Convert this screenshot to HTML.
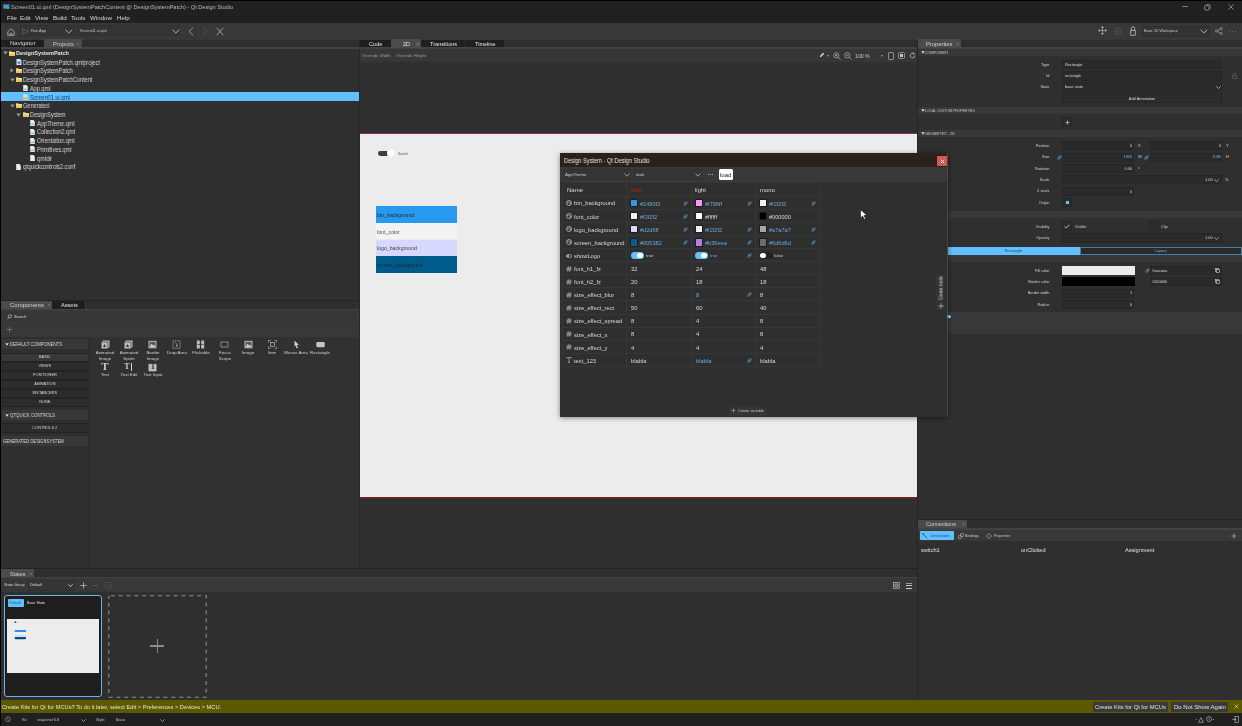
<!DOCTYPE html><html><head><meta charset="utf-8"><style>
html,body{margin:0;padding:0;width:1242px;height:726px;overflow:hidden;background:#000;}
body{position:relative;font-family:"Liberation Sans",sans-serif;}
.a{position:absolute;}
.t{position:absolute;white-space:nowrap;will-change:transform;}
</style></head><body><div id="root" style="position:absolute;left:0;top:0;width:1242px;height:726px;">
<div class="a" style="left:0px;top:0px;width:1242px;height:726px;background:#000;"></div>
<div class="a" style="left:1px;top:1px;width:1241px;height:22px;background:#202020;"></div>
<svg class="a" style="left:2.5px;top:3.5px" width="7" height="5.5" viewBox="0 0 7 5.5"><rect width="7" height="5.5" fill="#1e5c88"/><circle cx="2.2" cy="2.6" r="1.3" fill="none" stroke="#9fd0ee" stroke-width="0.8"/><path d="M5.6 1.4Q4.2 1 4.1 2.2T5.9 3.6Q5.5 4.6 4 4.2" fill="none" stroke="#9fd0ee" stroke-width="0.7"/></svg>
<div class="t" style="left:11px;top:3.84px;font-size:5.6px;line-height:6.72px;color:#b8b8b8;">Screen01.ui.qml (DesignSystemPatchContent @ DesignSystemPatch) - Qt Design Studio</div>
<svg class="a" style="left:1182px;top:3px" width="7" height="7" viewBox="0 0 7 7"><path d="M0.3 3.5H6" stroke="#a8a8a8" stroke-width="0.7"/></svg>
<svg class="a" style="left:1203.5px;top:3.5px" width="7" height="7" viewBox="0 0 7 7"><rect x="0.6" y="1.6" width="4.4" height="4.4" rx="0.8" fill="none" stroke="#a8a8a8" stroke-width="0.75"/><path d="M2 1.2A0.9 0.9 0 0 1 2.6 0.6H5.2A1 1 0 0 1 6.3 1.6V4.4A0.8 0.8 0 0 1 5.6 5.1" fill="none" stroke="#a8a8a8" stroke-width="0.6"/></svg>
<svg class="a" style="left:1227.5px;top:3.5px" width="6" height="6" viewBox="0 0 6 6"><path d="M0.5 0.5L5.5 5.5M5.5 0.5L0.5 5.5" stroke="#b0b0b0" stroke-width="0.65"/></svg>
<div class="t" style="left:7px;top:14.18px;font-size:6.2px;line-height:7.44px;color:#d8d8d8;">File</div>
<div class="t" style="left:20px;top:14.18px;font-size:6.2px;line-height:7.44px;color:#d8d8d8;">Edit</div>
<div class="t" style="left:35px;top:14.18px;font-size:6.2px;line-height:7.44px;color:#d8d8d8;">View</div>
<div class="t" style="left:53px;top:14.18px;font-size:6.2px;line-height:7.44px;color:#d8d8d8;">Build</div>
<div class="t" style="left:71px;top:14.18px;font-size:6.2px;line-height:7.44px;color:#d8d8d8;">Tools</div>
<div class="t" style="left:90px;top:14.18px;font-size:6.2px;line-height:7.44px;color:#d8d8d8;">Window</div>
<div class="t" style="left:117px;top:14.18px;font-size:6.2px;line-height:7.44px;color:#d8d8d8;">Help</div>
<div class="a" style="left:1px;top:23px;width:1241px;height:17px;background:#383838;"></div>
<div class="a" style="left:1px;top:40px;width:359px;height:529px;background:#2f2f2f;"></div>
<div class="a" style="left:1px;top:40px;width:359px;height:7px;background:#2e2e2e;"></div>
<div class="a" style="left:1px;top:40px;width:43px;height:7px;background:#1f1f1f;"></div>
<div class="a" style="left:1px;top:47px;width:359px;height:2px;background:#424242;"></div>
<div class="a" style="left:44px;top:39px;width:38px;height:9px;background:#4b4b4b;"></div>
<div class="t" style="left:10px;top:40.40px;font-size:6px;line-height:7.20px;color:#d0d0d0;">Navigator</div>
<div class="t" style="left:53px;top:40.55px;font-size:5.75px;line-height:6.90px;color:#c8c8c8;">Projects</div>
<svg class="a" style="left:75.5px;top:41.5px" width="4" height="4" viewBox="0 0 4 4"><path d="M0.5 0.5L3.5 3.5M3.5 0.5L0.5 3.5" stroke="#6a6a6a" stroke-width="0.6"/></svg>
<svg class="a" style="left:6.5px;top:27.5px" width="8" height="8" viewBox="0 0 8 8"><path d="M0.8 3.6L4 0.8L7.2 3.6V7.3H0.8Z M3 7.3V5.3H5V7.3" fill="none" stroke="#bdbdbd" stroke-width="0.75"/></svg>
<div class="a" style="left:19.7px;top:25.2px;width:55px;height:10.8px;background:#343434;border:0.5px solid #303030;box-sizing:border-box;"></div>
<svg class="a" style="left:21.5px;top:28px" width="8" height="7" viewBox="0 0 8 7"><path d="M0.6 0.5L6.8 3.5L0.6 6.5Z" fill="none" stroke="#468446" stroke-width="0.7"/></svg>
<div class="t" style="left:31px;top:29.03px;font-size:3.95px;line-height:4.74px;color:#c8c8c8;">Run App</div>
<svg class="a" style="left:65px;top:28.8px" width="8" height="5" viewBox="0 0 8 5"><path d="M0.5 0.8L3.8 4L7.2 0.8" fill="none" stroke="#d0d0d0" stroke-width="0.8"/></svg>
<div class="a" style="left:77px;top:25.2px;width:103px;height:10.8px;background:#343434;border:0.5px solid #303030;box-sizing:border-box;"></div>
<div class="t" style="left:79.7px;top:29.18px;font-size:3.7px;line-height:4.44px;color:#c0c0c0;">Screen01.ui.qml</div>
<svg class="a" style="left:171.5px;top:28.8px" width="8" height="5" viewBox="0 0 8 5"><path d="M0.5 0.8L3.8 4L7.2 0.8" fill="none" stroke="#d0d0d0" stroke-width="0.8"/></svg>
<svg class="a" style="left:187.5px;top:26.5px" width="6" height="9" viewBox="0 0 6 9"><path d="M5 0.8L1 4.5L5 8.2" fill="none" stroke="#a8a8a8" stroke-width="0.8"/></svg>
<svg class="a" style="left:202px;top:26.5px" width="6" height="9" viewBox="0 0 6 9"><path d="M1 0.8L5 4.5L1 8.2" fill="none" stroke="#5a5a5a" stroke-width="0.8"/></svg>
<svg class="a" style="left:215.5px;top:26.5px" width="8" height="9" viewBox="0 0 8 9"><path d="M0.7 0.8L7.3 8.2M7.3 0.8L0.7 8.2" fill="none" stroke="#b8b8b8" stroke-width="0.8"/></svg>
<svg class="a" style="left:1098px;top:26px" width="9" height="9" viewBox="0 0 9 9"><path d="M4.5 0.5V8.5M0.5 4.5H8.5M3 2L4.5 0.5L6 2M3 7L4.5 8.5L6 7M2 3L0.5 4.5L2 6M7 3L8.5 4.5L7 6" fill="none" stroke="#b0b0b0" stroke-width="0.7"/></svg>
<svg class="a" style="left:1113.5px;top:26.5px" width="8" height="8" viewBox="0 0 8 8"><circle cx="4" cy="4" r="3.3" fill="none" stroke="#5a5a5a" stroke-width="0.7"/><path d="M2.5 4L3.6 5.2L5.6 2.6" fill="none" stroke="#5a5a5a" stroke-width="0.7"/></svg>
<svg class="a" style="left:1129.5px;top:25.5px" width="6" height="10" viewBox="0 0 6 10"><path d="M1.3 4.5V2.5A1.7 1.7 0 0 1 4.7 2.5V4.5M0.7 4.5H5.3V9.3H0.7Z" fill="none" stroke="#c0c0c0" stroke-width="0.8"/></svg>
<div class="a" style="left:1142px;top:25.5px;width:67.5px;height:11px;background:#333333;border:0.5px solid #2e2e2e;box-sizing:border-box;"></div>
<div class="t" style="left:1143.6px;top:29.31px;font-size:3.65px;line-height:4.38px;color:#c8c8c8;">Basic 2D Workspace</div>
<svg class="a" style="left:1199.5px;top:28.5px" width="8" height="5" viewBox="0 0 8 5"><path d="M0.5 0.8L3.8 4L7.2 0.8" fill="none" stroke="#d0d0d0" stroke-width="0.8"/></svg>
<svg class="a" style="left:1214.5px;top:27px" width="8" height="8" viewBox="0 0 8 8"><circle cx="1.6" cy="4" r="1.1" fill="none" stroke="#b8b8b8" stroke-width="0.6"/><circle cx="6.3" cy="1.5" r="1.1" fill="none" stroke="#b8b8b8" stroke-width="0.6"/><circle cx="6.3" cy="6.5" r="1.1" fill="none" stroke="#b8b8b8" stroke-width="0.6"/><path d="M2.6 3.5L5.3 2M2.6 4.5L5.3 6" stroke="#b8b8b8" stroke-width="0.6"/></svg>
<div class="a" style="left:1229px;top:31px;width:0.9px;height:0.9px;background:#8a8a8a;border-radius:50%;"></div>
<div class="a" style="left:1232px;top:31px;width:0.9px;height:0.9px;background:#8a8a8a;border-radius:50%;"></div>
<div class="a" style="left:1235px;top:31px;width:0.9px;height:0.9px;background:#8a8a8a;border-radius:50%;"></div>
<svg class="a" style="left:2.6999999999999993px;top:51.400000000000006px" width="5" height="4" viewBox="0 0 5 4"><path d="M0.3 0.5H4.7L2.5 3.5Z" fill="#9a9a9a"/></svg>
<svg class="a" style="left:9.2px;top:50.6px" width="6" height="5" viewBox="0 0 6 5"><path d="M0 0.3H2.3L2.9 0.9H6V5H0Z" fill="#e9c45a"/><rect x="0" y="1.4" width="6" height="1.1" fill="#f5e7b0"/></svg>
<div class="t" style="left:16.2px;top:50.40px;font-size:5.5px;line-height:6.60px;color:#e6e6e6;font-weight:bold;">DesignSystemPatch</div>
<svg class="a" style="left:16.0px;top:58.93000000000001px" width="6" height="6" viewBox="0 0 6 6"><path d="M0.5 0H4L5.5 1.5V6H0.5Z" fill="#dfe6ea"/><circle cx="3" cy="3.6" r="1.6" fill="#4d93c4"/></svg>
<div class="t" style="left:23.0px;top:58.65px;font-size:6.3px;line-height:7.56px;color:#d6d6d6;transform:scaleX(0.88);transform-origin:0 50%;">DesignSystemPatch.qmlproject</div>
<svg class="a" style="left:10.2px;top:68.16px" width="4" height="5" viewBox="0 0 4 5"><path d="M0.5 0.3V4.7L3.5 2.5Z" fill="#9a9a9a"/></svg>
<svg class="a" style="left:16.0px;top:68.06px" width="6" height="5" viewBox="0 0 6 5"><path d="M0 0.3H2.3L2.9 0.9H6V5H0Z" fill="#e9c45a"/><rect x="0" y="1.4" width="6" height="1.1" fill="#f5e7b0"/></svg>
<div class="t" style="left:23.0px;top:67.38px;font-size:6.3px;line-height:7.56px;color:#d6d6d6;transform:scaleX(0.88);transform-origin:0 50%;">DesignSystemPatch</div>
<svg class="a" style="left:9.5px;top:77.59px" width="5" height="4" viewBox="0 0 5 4"><path d="M0.3 0.5H4.7L2.5 3.5Z" fill="#9a9a9a"/></svg>
<svg class="a" style="left:16.0px;top:76.79px" width="6" height="5" viewBox="0 0 6 5"><path d="M0 0.3H2.3L2.9 0.9H6V5H0Z" fill="#e9c45a"/><rect x="0" y="1.4" width="6" height="1.1" fill="#f5e7b0"/></svg>
<div class="t" style="left:23.0px;top:76.11px;font-size:6.3px;line-height:7.56px;color:#d6d6d6;transform:scaleX(0.88);transform-origin:0 50%;">DesignSystemPatchContent</div>
<svg class="a" style="left:22.799999999999997px;top:85.12px" width="5" height="6" viewBox="0 0 5 6"><path d="M0.2 0H3.3L4.8 1.5V6H0.2Z" fill="#ececec"/><rect x="0.2" y="3.6" width="4.6" height="1.6" fill="#8fc7d8"/></svg>
<div class="t" style="left:29.799999999999997px;top:84.84px;font-size:6.3px;line-height:7.56px;color:#d6d6d6;transform:scaleX(0.88);transform-origin:0 50%;">App.qml</div>
<div class="a" style="left:1px;top:92.35000000000001px;width:359px;height:9px;background:#61c0fd;"></div>
<svg class="a" style="left:22.799999999999997px;top:93.85000000000001px" width="5" height="6" viewBox="0 0 5 6"><path d="M0.2 0H3.3L4.8 1.5V6H0.2Z" fill="#cfd9e0"/><rect x="0.2" y="3.6" width="4.6" height="1.6" fill="#e9a95a"/></svg>
<div class="t" style="left:29.799999999999997px;top:93.57px;font-size:6.3px;line-height:7.56px;color:#0a3f66;transform:scaleX(0.88);transform-origin:0 50%;">Screen01.ui.qml</div>
<svg class="a" style="left:9.5px;top:103.78000000000002px" width="5" height="4" viewBox="0 0 5 4"><path d="M0.3 0.5H4.7L2.5 3.5Z" fill="#9a9a9a"/></svg>
<svg class="a" style="left:16.0px;top:102.98000000000002px" width="6" height="5" viewBox="0 0 6 5"><path d="M0 0.3H2.3L2.9 0.9H6V5H0Z" fill="#e9c45a"/><rect x="0" y="1.4" width="6" height="1.1" fill="#f5e7b0"/></svg>
<div class="t" style="left:23.0px;top:102.30px;font-size:6.3px;line-height:7.56px;color:#d6d6d6;transform:scaleX(0.88);transform-origin:0 50%;">Generated</div>
<svg class="a" style="left:16.299999999999997px;top:112.51px" width="5" height="4" viewBox="0 0 5 4"><path d="M0.3 0.5H4.7L2.5 3.5Z" fill="#9a9a9a"/></svg>
<svg class="a" style="left:22.799999999999997px;top:111.71000000000001px" width="6" height="5" viewBox="0 0 6 5"><path d="M0 0.3H2.3L2.9 0.9H6V5H0Z" fill="#e9c45a"/><rect x="0" y="1.4" width="6" height="1.1" fill="#f5e7b0"/></svg>
<div class="t" style="left:29.799999999999997px;top:111.03px;font-size:6.3px;line-height:7.56px;color:#d6d6d6;transform:scaleX(0.88);transform-origin:0 50%;">DesignSystem</div>
<svg class="a" style="left:29.599999999999998px;top:120.04px" width="5" height="6" viewBox="0 0 5 6"><path d="M0.2 0H3.3L4.8 1.5V6H0.2Z" fill="#ececec"/><rect x="0.2" y="3.6" width="4.6" height="1.6" fill="#8fc7d8"/></svg>
<div class="t" style="left:36.599999999999994px;top:119.76px;font-size:6.3px;line-height:7.56px;color:#d6d6d6;transform:scaleX(0.88);transform-origin:0 50%;">AppTheme.qml</div>
<svg class="a" style="left:29.599999999999998px;top:128.77px" width="5" height="6" viewBox="0 0 5 6"><path d="M0.2 0H3.3L4.8 1.5V6H0.2Z" fill="#ececec"/><rect x="0.2" y="3.6" width="4.6" height="1.6" fill="#8fc7d8"/></svg>
<div class="t" style="left:36.599999999999994px;top:128.49px;font-size:6.3px;line-height:7.56px;color:#d6d6d6;transform:scaleX(0.88);transform-origin:0 50%;">Collection2.qml</div>
<svg class="a" style="left:29.599999999999998px;top:137.5px" width="5" height="6" viewBox="0 0 5 6"><path d="M0.2 0H3.3L4.8 1.5V6H0.2Z" fill="#ececec"/><rect x="0.2" y="3.6" width="4.6" height="1.6" fill="#8fc7d8"/></svg>
<div class="t" style="left:36.599999999999994px;top:137.22px;font-size:6.3px;line-height:7.56px;color:#d6d6d6;transform:scaleX(0.88);transform-origin:0 50%;">Orientation.qml</div>
<svg class="a" style="left:29.599999999999998px;top:146.23000000000002px" width="5" height="6" viewBox="0 0 5 6"><path d="M0.2 0H3.3L4.8 1.5V6H0.2Z" fill="#ececec"/><rect x="0.2" y="3.6" width="4.6" height="1.6" fill="#8fc7d8"/></svg>
<div class="t" style="left:36.599999999999994px;top:145.95px;font-size:6.3px;line-height:7.56px;color:#d6d6d6;transform:scaleX(0.88);transform-origin:0 50%;">Primitives.qml</div>
<svg class="a" style="left:29.599999999999998px;top:154.96px" width="5" height="6" viewBox="0 0 5 6"><path d="M0.2 0H3.3L4.8 1.5V6H0.2Z" fill="#ececec"/></svg>
<div class="t" style="left:36.599999999999994px;top:154.68px;font-size:6.3px;line-height:7.56px;color:#d6d6d6;transform:scaleX(0.88);transform-origin:0 50%;">qmldir</div>
<svg class="a" style="left:16.0px;top:163.69px" width="5" height="6" viewBox="0 0 5 6"><path d="M0.2 0H3.3L4.8 1.5V6H0.2Z" fill="#ececec"/></svg>
<div class="t" style="left:23.0px;top:163.41px;font-size:6.3px;line-height:7.56px;color:#d6d6d6;transform:scaleX(0.88);transform-origin:0 50%;">qtquickcontrols2.conf</div>
<div class="a" style="left:1px;top:300px;width:359px;height:1px;background:#242424;"></div>
<div class="a" style="left:1px;top:301px;width:359px;height:8px;background:#2e2e2e;"></div>
<div class="a" style="left:1px;top:301px;width:51px;height:8px;background:#4b4b4b;"></div>
<div class="a" style="left:52px;top:301px;width:33px;height:8px;background:#1f1f1f;"></div>
<div class="a" style="left:85px;top:301px;width:1px;height:8px;background:#3e3e3e;"></div>
<div class="t" style="left:10px;top:301.90px;font-size:6px;line-height:7.20px;color:#d0d0d0;">Components</div>
<svg class="a" style="left:47px;top:303px" width="4" height="4" viewBox="0 0 4 4"><path d="M0.5 0.5L3.5 3.5M3.5 0.5L0.5 3.5" stroke="#7a7a7a" stroke-width="0.6"/></svg>
<div class="t" style="left:60.5px;top:302.14px;font-size:5.6px;line-height:6.72px;color:#e0e0e0;">Assets</div>
<div class="a" style="left:1px;top:309px;width:359px;height:1px;background:#424242;"></div>
<div class="a" style="left:1px;top:310px;width:359px;height:27px;background:#383838;"></div>
<div class="a" style="left:4px;top:311.5px;width:352px;height:10.5px;background:#363636;"></div>
<svg class="a" style="left:6.5px;top:313.5px" width="5" height="6" viewBox="0 0 5 6"><circle cx="3" cy="2.2" r="1.6" fill="none" stroke="#d0d0d0" stroke-width="0.6"/><path d="M1.9 3.4L0.5 5.2" stroke="#d0d0d0" stroke-width="0.7"/></svg>
<div class="t" style="left:14.3px;top:314.86px;font-size:3.9px;line-height:4.68px;color:#d8d8d8;">Search</div>
<svg class="a" style="left:5.5px;top:326px" width="7" height="7" viewBox="0 0 7 7"><path d="M3.5 0.5V6.5M0.5 3.5H6.5" stroke="#8a8a8a" stroke-width="0.6"/></svg>
<div class="a" style="left:1px;top:337px;width:359px;height:232px;background:#2f2f2f;"></div>
<div class="a" style="left:89px;top:337px;width:271px;height:232px;background:#313131;"></div>
<div class="a" style="left:2.4px;top:339px;width:85.6px;height:10.3px;background:#383838;"></div>
<svg class="a" style="left:4.9px;top:342.65px" width="4" height="3" viewBox="0 0 4 3"><path d="M0.2 0.3H3.8L2 2.8Z" fill="#d8d8d8"/></svg>
<div class="t" style="left:9.9px;top:341.41px;font-size:5.4px;line-height:6.48px;color:#d8d8d8;transform:scaleX(0.8170781838757899);transform-origin:0 50%;">DEFAULT COMPONENTS</div>
<div class="a" style="left:2.4px;top:352.5px;width:85.6px;height:9px;background:#383838;border-top:1px solid #232323;border-bottom:1px solid #232323;box-sizing:border-box;"></div>
<div class="t" style="left:2.4px;top:355.16px;font-size:3.9px;line-height:4.68px;color:#d8d8d8;width:85.6px;text-align:center;">BASIC</div>
<div class="a" style="left:2.4px;top:361.5px;width:85.6px;height:9px;background:#2c2c2c;border-top:1px solid #232323;border-bottom:1px solid #232323;box-sizing:border-box;"></div>
<div class="t" style="left:2.4px;top:364.16px;font-size:3.9px;line-height:4.68px;color:#d8d8d8;width:85.6px;text-align:center;">VIEWS</div>
<div class="a" style="left:2.4px;top:370.5px;width:85.6px;height:9px;background:#2c2c2c;border-top:1px solid #232323;border-bottom:1px solid #232323;box-sizing:border-box;"></div>
<div class="t" style="left:2.4px;top:373.16px;font-size:3.9px;line-height:4.68px;color:#d8d8d8;width:85.6px;text-align:center;">POSITIONER</div>
<div class="a" style="left:2.4px;top:379.5px;width:85.6px;height:9px;background:#2c2c2c;border-top:1px solid #232323;border-bottom:1px solid #232323;box-sizing:border-box;"></div>
<div class="t" style="left:2.4px;top:382.16px;font-size:3.9px;line-height:4.68px;color:#d8d8d8;width:85.6px;text-align:center;">ANIMATION</div>
<div class="a" style="left:2.4px;top:388.5px;width:85.6px;height:9px;background:#2c2c2c;border-top:1px solid #232323;border-bottom:1px solid #232323;box-sizing:border-box;"></div>
<div class="t" style="left:2.4px;top:391.16px;font-size:3.9px;line-height:4.68px;color:#d8d8d8;width:85.6px;text-align:center;">INSTANCERS</div>
<div class="a" style="left:2.4px;top:397.5px;width:85.6px;height:9px;background:#2c2c2c;border-top:1px solid #232323;border-bottom:1px solid #232323;box-sizing:border-box;"></div>
<div class="t" style="left:2.4px;top:400.16px;font-size:3.9px;line-height:4.68px;color:#d8d8d8;width:85.6px;text-align:center;">NONE</div>
<div class="a" style="left:2.4px;top:410px;width:85.6px;height:10.3px;background:#383838;"></div>
<svg class="a" style="left:4.9px;top:413.65px" width="4" height="3" viewBox="0 0 4 3"><path d="M0.2 0.3H3.8L2 2.8Z" fill="#d8d8d8"/></svg>
<div class="t" style="left:9.9px;top:412.41px;font-size:5.4px;line-height:6.48px;color:#d8d8d8;transform:scaleX(0.8020894429990124);transform-origin:0 50%;">QTQUICK CONTROLS</div>
<div class="a" style="left:2.4px;top:422.5px;width:85.6px;height:10px;background:#2c2c2c;border-top:1px solid #232323;border-bottom:1px solid #232323;box-sizing:border-box;"></div>
<div class="t" style="left:2.4px;top:425.86px;font-size:3.9px;line-height:4.68px;color:#d8d8d8;width:85.6px;text-align:center;">CONTROLS 2</div>
<div class="a" style="left:1px;top:435.6px;width:87px;height:10.4px;background:#383838;"></div>
<div class="t" style="left:2.5px;top:438.06px;font-size:5.4px;line-height:6.48px;color:#d8d8d8;transform:scaleX(0.785948908489295);transform-origin:0 50%;">GENERATED DESIGNSYSTEM</div>
<div class="a" style="left:89px;top:337px;width:1px;height:232px;background:#2a2a2a;"></div>
<svg class="a" style="left:100.5px;top:340px" width="9" height="9" viewBox="0 0 9 9"><path d="M2 0.5H8.5V7L7 8.5H0.5V2Z" fill="#bdbdbd"/><path d="M0.5 2H7V8.5" fill="none" stroke="#2d2d2d" stroke-width="0.6"/><path d="M2 7L3.5 4L5 7Z" fill="#333"/></svg>
<div class="t" style="left:93.0px;top:349.6px;width:24px;text-align:center;font-size:4.4px;line-height:6.2px;color:#cfcfcf;">Animated<br>Image</div>
<svg class="a" style="left:124.4px;top:340px" width="9" height="9" viewBox="0 0 9 9"><path d="M2 0.5H8.5V7L7 8.5H0.5V2Z" fill="#bdbdbd"/><path d="M0.5 2H7V8.5" fill="none" stroke="#2d2d2d" stroke-width="0.6"/><path d="M2 7L3.5 4L5 7Z" fill="#333"/></svg>
<div class="t" style="left:116.9px;top:349.6px;width:24px;text-align:center;font-size:4.4px;line-height:6.2px;color:#cfcfcf;">Animated<br>Sprite</div>
<svg class="a" style="left:148.3px;top:340px" width="9" height="9" viewBox="0 0 9 9"><rect x="0.5" y="0.8" width="8" height="7.5" fill="#bdbdbd"/><rect x="1.5" y="1.8" width="6" height="5.5" fill="#555"/><path d="M1.5 7.3L3.5 3.5L5 5.5L6 4.5L7.5 7.3Z" fill="#ccc"/></svg>
<div class="t" style="left:140.8px;top:349.6px;width:24px;text-align:center;font-size:4.4px;line-height:6.2px;color:#cfcfcf;">Border<br>Image</div>
<svg class="a" style="left:172.2px;top:340px" width="9" height="9" viewBox="0 0 9 9"><rect x="1" y="0.8" width="7" height="7.5" fill="none" stroke="#bdbdbd" stroke-width="0.7" stroke-dasharray="1.2 0.6"/><path d="M3.5 2.5L5.5 5.5L4.5 5.5L5 7" stroke="#bdbdbd" stroke-width="0.7" fill="none"/></svg>
<div class="t" style="left:164.7px;top:349.6px;width:24px;text-align:center;font-size:4.4px;line-height:6.2px;color:#cfcfcf;">Drop Area</div>
<svg class="a" style="left:196.1px;top:340px" width="9" height="9" viewBox="0 0 9 9"><rect x="0.8" y="0.5" width="3" height="8" fill="#bdbdbd"/><rect x="5.2" y="0.5" width="3" height="8" fill="#bdbdbd"/><path d="M1.5 4.5H7.5" stroke="#333" stroke-width="0.7"/></svg>
<div class="t" style="left:188.6px;top:349.6px;width:24px;text-align:center;font-size:4.4px;line-height:6.2px;color:#cfcfcf;">Flickable</div>
<svg class="a" style="left:220.0px;top:340px" width="9" height="9" viewBox="0 0 9 9"><rect x="1" y="2" width="7" height="5" fill="none" stroke="#bdbdbd" stroke-width="0.6"/></svg>
<div class="t" style="left:212.5px;top:349.6px;width:24px;text-align:center;font-size:4.4px;line-height:6.2px;color:#cfcfcf;">Focus<br>Scope</div>
<svg class="a" style="left:243.89999999999998px;top:340px" width="9" height="9" viewBox="0 0 9 9"><rect x="0.5" y="0.8" width="8" height="7.5" fill="#bdbdbd"/><rect x="1.5" y="1.8" width="6" height="5.5" fill="#555"/><path d="M1.5 7.3L3.5 3.5L5 5.5L6 4.5L7.5 7.3Z" fill="#ccc"/></svg>
<div class="t" style="left:236.39999999999998px;top:349.6px;width:24px;text-align:center;font-size:4.4px;line-height:6.2px;color:#cfcfcf;">Image</div>
<svg class="a" style="left:267.79999999999995px;top:340px" width="9" height="9" viewBox="0 0 9 9"><path d="M0.5 2.5V0.5H2.5M6.5 0.5H8.5V2.5M8.5 6.5V8.5H6.5M2.5 8.5H0.5V6.5" fill="none" stroke="#bdbdbd" stroke-width="0.6"/><rect x="2.5" y="2.5" width="4" height="4" fill="none" stroke="#bdbdbd" stroke-width="0.7"/></svg>
<div class="t" style="left:260.29999999999995px;top:349.6px;width:24px;text-align:center;font-size:4.4px;line-height:6.2px;color:#cfcfcf;">Item</div>
<svg class="a" style="left:291.7px;top:340px" width="9" height="9" viewBox="0 0 9 9"><path d="M2.5 0.5L7 5H4.8L6 8L4.8 8.5L3.6 5.5L2.5 6.8Z" fill="#cfcfcf"/></svg>
<div class="t" style="left:284.2px;top:349.6px;width:24px;text-align:center;font-size:4.4px;line-height:6.2px;color:#cfcfcf;">Mouse Area</div>
<svg class="a" style="left:315.6px;top:340px" width="9" height="9" viewBox="0 0 9 9"><rect x="0.3" y="2" width="8.4" height="5.3" rx="1.2" fill="#c4c4c4"/></svg>
<div class="t" style="left:308.1px;top:349.6px;width:24px;text-align:center;font-size:4.4px;line-height:6.2px;color:#cfcfcf;">Rectangle</div>
<div class="t" style="left:100.0px;top:360.5px;width:10px;text-align:center;font-family:'Liberation Serif',serif;font-weight:bold;font-size:11px;line-height:11px;color:#cfcfcf;">T</div>
<div class="t" style="left:93.0px;top:371.6px;width:24px;text-align:center;font-size:4.4px;line-height:6.2px;color:#cfcfcf;">Text</div>
<div class="t" style="left:123.4px;top:362.0px;width:8px;text-align:center;font-family:'Liberation Serif',serif;font-weight:bold;font-size:8px;line-height:9px;color:#cfcfcf;">T</div>
<div class="a" style="left:130.70000000000002px;top:362.5px;width:0.7px;height:8.5px;background:#cfcfcf;"></div>
<div class="t" style="left:116.9px;top:371.6px;width:24px;text-align:center;font-size:4.4px;line-height:6.2px;color:#cfcfcf;">Text Edit</div>
<svg class="a" style="left:148.3px;top:362.5px" width="9" height="9" viewBox="0 0 9 9"><rect x="0.5" y="0.8" width="8" height="7.5" fill="#bdbdbd"/></svg>
<div class="t" style="left:148.8px;top:362.8px;width:8px;text-align:center;font-family:'Liberation Serif',serif;font-weight:bold;font-size:7.5px;line-height:8px;color:#333;">T</div>
<div class="t" style="left:140.8px;top:371.6px;width:24px;text-align:center;font-size:4.4px;line-height:6.2px;color:#cfcfcf;">Text Input</div>
<div class="a" style="left:360px;top:40px;width:557px;height:529px;background:#303030;"></div>
<div class="a" style="left:360px;top:40px;width:557px;height:7px;background:#2e2e2e;"></div>
<div class="a" style="left:360px;top:40px;width:31px;height:7px;background:#1f1f1f;"></div>
<div class="a" style="left:421px;top:40px;width:44px;height:7px;background:#1f1f1f;"></div>
<div class="a" style="left:466px;top:40px;width:38px;height:7px;background:#1f1f1f;"></div>
<div class="a" style="left:360px;top:47px;width:557px;height:2px;background:#424242;"></div>
<div class="a" style="left:391px;top:39px;width:30px;height:9px;background:#4b4b4b;"></div>
<div class="a" style="left:360px;top:49px;width:557px;height:13px;background:#363636;"></div>
<div class="a" style="left:360px;top:133px;width:557px;height:1px;background:#8a2870;"></div>
<div class="a" style="left:360px;top:134px;width:557px;height:363px;background:#ececec;"></div>
<div class="a" style="left:360px;top:497px;width:557px;height:1px;background:#8a1e1e;"></div>
<div class="a" style="left:917px;top:133px;width:1px;height:365px;background:#000;"></div>
<div class="a" style="left:359px;top:40px;width:1px;height:529px;background:#282828;"></div>
<div class="t" style="left:369px;top:40.74px;font-size:5.6px;line-height:6.72px;color:#e8e8e8;">Code</div>
<div class="t" style="left:402.8px;top:40.86px;font-size:5.4px;line-height:6.48px;color:#e8e8e8;">2D</div>
<svg class="a" style="left:415.5px;top:41.8px" width="4" height="4" viewBox="0 0 4 4"><path d="M0.5 0.5L3.5 3.5M3.5 0.5L0.5 3.5" stroke="#8a8a8a" stroke-width="0.6"/></svg>
<div class="t" style="left:430px;top:40.74px;font-size:5.6px;line-height:6.72px;color:#e8e8e8;">Transitions</div>
<div class="t" style="left:475.2px;top:40.80px;font-size:5.5px;line-height:6.60px;color:#e8e8e8;">Timeline</div>
<div class="a" style="left:361px;top:50.6px;width:30px;height:9.3px;background:#383838;"></div>
<div class="a" style="left:394.5px;top:50.6px;width:32px;height:9.3px;background:#383838;"></div>
<div class="t" style="left:361.6px;top:53.42px;font-size:4.3px;line-height:5.16px;color:#9a9a9a;">Override Width</div>
<div class="t" style="left:395.5px;top:53.42px;font-size:4.3px;line-height:5.16px;color:#9a9a9a;">Override Height</div>
<svg class="a" style="left:818.5px;top:52px" width="6" height="6" viewBox="0 0 6 6"><path d="M0.8 5.2L1.2 3.8L4.2 0.8L5.2 1.8L2.2 4.8Z" fill="#e0e0e0"/></svg>
<div class="t" style="left:826.5px;top:54.20px;font-size:3.5px;line-height:4.20px;color:#9a9a9a;">▾</div>
<svg class="a" style="left:832.5px;top:51.5px" width="8" height="8" viewBox="0 0 8 8"><circle cx="3.3" cy="3.3" r="2.6" fill="none" stroke="#c8c8c8" stroke-width="0.6"/><path d="M5.2 5.2L7.5 7.5M2 3.3H4.6M3.3 2V4.6" stroke="#c8c8c8" stroke-width="0.6"/></svg>
<svg class="a" style="left:843.5px;top:51.5px" width="8" height="8" viewBox="0 0 8 8"><circle cx="3.3" cy="3.3" r="2.6" fill="none" stroke="#c8c8c8" stroke-width="0.6"/><path d="M5.2 5.2L7.5 7.5M2 3.3H4.6" stroke="#c8c8c8" stroke-width="0.6"/></svg>
<div class="t" style="left:855px;top:52.88px;font-size:5.2px;line-height:6.24px;color:#c8c8c8;">100 %</div>
<div class="t" style="left:880.5px;top:54.20px;font-size:3.5px;line-height:4.20px;color:#9a9a9a;">▾</div>
<svg class="a" style="left:887.5px;top:51.5px" width="6" height="8" viewBox="0 0 6 8"><rect x="0.5" y="0.5" width="5" height="7" rx="0.6" fill="none" stroke="#c8c8c8" stroke-width="0.6"/></svg>
<svg class="a" style="left:897.5px;top:51.5px" width="7" height="7" viewBox="0 0 7 7"><rect x="0.5" y="0.5" width="6" height="6" rx="1" fill="none" stroke="#c8c8c8" stroke-width="0.6"/><rect x="2" y="2" width="3" height="3" fill="#c8c8c8"/></svg>
<svg class="a" style="left:908.5px;top:51.8px" width="7" height="7" viewBox="0 0 7 7"><path d="M5.8 3.5A2.3 2.3 0 1 1 4.8 1.6" fill="none" stroke="#c8c8c8" stroke-width="0.7"/><path d="M4 0.5L5.6 1.5L4.4 2.8" fill="none" stroke="#c8c8c8" stroke-width="0.6"/></svg>
<div class="a" style="left:377.9px;top:151px;width:11px;height:4.8px;background:#3d3d3d;border-radius:2.4px;"></div>
<div class="a" style="left:387.2px;top:148.9px;width:8.2px;height:8.2px;background:#ffffff;border-radius:50%;box-shadow:0 0 0.6px rgba(0,0,0,0.35);"></div>
<div class="t" style="left:398px;top:151.66px;font-size:3.4px;line-height:4.08px;color:#555555;">Switch</div>
<div class="a" style="left:376.1px;top:206.1px;width:80.8px;height:16.7px;background:#2999f0;"></div>
<div class="a" style="left:376.1px;top:222.8px;width:80.8px;height:16.7px;background:#f3f3f3;"></div>
<div class="a" style="left:376.1px;top:239.5px;width:80.8px;height:16.6px;background:#d8d8ff;"></div>
<div class="a" style="left:376.1px;top:256.1px;width:80.8px;height:16.8px;background:#005a8a;"></div>
<div class="t" style="left:377px;top:211.88px;font-size:5.2px;line-height:6.24px;color:#1d2b38;">btn_background</div>
<div class="t" style="left:377px;top:228.58px;font-size:5.2px;line-height:6.24px;color:#555;">font_color</div>
<div class="t" style="left:377px;top:245.18px;font-size:5.2px;line-height:6.24px;color:#444;">logo_background</div>
<div class="t" style="left:377px;top:261.88px;font-size:5.2px;line-height:6.24px;color:#1a2a35;">screen_background</div>
<div class="a" style="left:918px;top:40px;width:324px;height:480px;background:#2f2f2f;"></div>
<div class="a" style="left:918px;top:40px;width:324px;height:7px;background:#2e2e2e;"></div>
<div class="a" style="left:918px;top:47px;width:324px;height:2px;background:#424242;"></div>
<div class="a" style="left:918px;top:39px;width:43px;height:9px;background:#4b4b4b;"></div>
<div class="t" style="left:926px;top:40.52px;font-size:5.8px;line-height:6.96px;color:#d0d0d0;">Properties</div>
<svg class="a" style="left:956px;top:41.8px" width="4" height="4" viewBox="0 0 4 4"><path d="M0.5 0.5L3.5 3.5M3.5 0.5L0.5 3.5" stroke="#7a7a7a" stroke-width="0.6"/></svg>
<div class="a" style="left:918px;top:49px;width:324px;height:7px;background:#383838;"></div>
<svg class="a" style="left:920.5px;top:51.2px" width="4" height="3" viewBox="0 0 4 3"><path d="M0.2 0.3H3.8L2 2.8Z" fill="#d8d8d8"/></svg>
<div class="t" style="left:925px;top:51.04px;font-size:4.1px;line-height:4.92px;color:#c8c8c8;transform:scaleX(0.8818011257035647);transform-origin:0 50%;">COMPONENT</div>
<div class="t" style="left:1000px;top:62.56px;font-size:3.9px;line-height:4.68px;color:#d0d0d0;width:49.5px;text-align:right;">Type</div>
<div class="a" style="left:1062.4px;top:59.5px;width:160.1px;height:9.6px;background:#2a2a2a;border:0.6px solid #262626;box-sizing:border-box;border-radius:0.6px;"></div>
<div class="t" style="left:1064.5px;top:62.56px;font-size:3.9px;line-height:4.68px;color:#d8d8d8;">Rectangle</div>
<div class="t" style="left:1000px;top:74.16px;font-size:3.9px;line-height:4.68px;color:#d0d0d0;width:49.5px;text-align:right;">Id</div>
<div class="a" style="left:1062.4px;top:71px;width:160.1px;height:9.6px;background:#2a2a2a;border:0.6px solid #262626;box-sizing:border-box;border-radius:0.6px;"></div>
<div class="t" style="left:1064.5px;top:74.16px;font-size:3.9px;line-height:4.68px;color:#d8d8d8;">rectangle</div>
<svg class="a" style="left:1231.5px;top:72.5px" width="5" height="6" viewBox="0 0 5 6"><path d="M1.1 2.6V1.6A1.4 1.4 0 0 1 3.9 1.6V2.6M0.6 2.6H4.4V5.6H0.6Z" fill="none" stroke="#6a6a6a" stroke-width="0.6"/></svg>
<div class="t" style="left:1000px;top:85.16px;font-size:3.9px;line-height:4.68px;color:#d0d0d0;width:49.5px;text-align:right;">State</div>
<div class="a" style="left:1062.4px;top:82.3px;width:160.1px;height:9.6px;background:#2a2a2a;border:0.6px solid #262626;box-sizing:border-box;border-radius:0.6px;"></div>
<div class="t" style="left:1064.5px;top:85.16px;font-size:3.9px;line-height:4.68px;color:#d8d8d8;">base state</div>
<svg class="a" style="left:1215.5px;top:86px" width="5" height="3" viewBox="0 0 5 3"><path d="M0.4 0.4L2.5 2.5L4.6 0.4" fill="none" stroke="#d0d0d0" stroke-width="0.7"/></svg>
<div class="a" style="left:1062.4px;top:93.4px;width:160.1px;height:9.9px;background:#2c2c2c;border:0.6px solid #262626;box-sizing:border-box;border-radius:0.6px;"></div>
<div class="t" style="left:1062.4px;top:96.56px;font-size:3.9px;line-height:4.68px;color:#d8d8d8;width:160.1px;text-align:center;">Add Annotation</div>
<div class="a" style="left:918px;top:106.8px;width:324px;height:7.4px;background:#383838;"></div>
<svg class="a" style="left:920.5px;top:109.2px" width="4" height="3" viewBox="0 0 4 3"><path d="M0.2 0.3H3.8L2 2.8Z" fill="#d8d8d8"/></svg>
<div class="t" style="left:925px;top:109.04px;font-size:4.1px;line-height:4.92px;color:#c8c8c8;transform:scaleX(0.8387021189546942);transform-origin:0 50%;">LOCAL CUSTOM PROPERTIES</div>
<div class="a" style="left:1062px;top:117px;width:10px;height:10px;background:#2c2c2c;border:0.6px solid #262626;box-sizing:border-box;border-radius:0.6px;"></div>
<svg class="a" style="left:1064.5px;top:119.5px" width="5" height="5" viewBox="0 0 5 5"><path d="M2.5 0.5V4.5M0.5 2.5H4.5" stroke="#d0d0d0" stroke-width="0.7"/></svg>
<div class="a" style="left:918px;top:130px;width:324px;height:7.2px;background:#383838;"></div>
<svg class="a" style="left:920.5px;top:132.29999999999998px" width="4" height="3" viewBox="0 0 4 3"><path d="M0.2 0.3H3.8L2 2.8Z" fill="#d8d8d8"/></svg>
<div class="t" style="left:925px;top:132.14px;font-size:4.1px;line-height:4.92px;color:#c8c8c8;transform:scaleX(0.9317217781716027);transform-origin:0 50%;">GEOMETRY - 2D</div>
<div class="t" style="left:1000px;top:143.96px;font-size:3.9px;line-height:4.68px;color:#d0d0d0;width:49.5px;text-align:right;">Position</div>
<div class="a" style="left:1062.4px;top:141.3px;width:72px;height:9.2px;background:#2a2a2a;border:0.6px solid #262626;box-sizing:border-box;border-radius:0.6px;"></div>
<div class="t" style="left:1062.4px;top:144.06px;font-size:3.9px;line-height:4.68px;color:#d8d8d8;width:70.2px;text-align:right;">0</div>
<div class="t" style="left:1138px;top:143.96px;font-size:3.9px;line-height:4.68px;color:#d0d0d0;">X</div>
<div class="a" style="left:1149.6px;top:141.3px;width:72.9px;height:9.2px;background:#2a2a2a;border:0.6px solid #262626;box-sizing:border-box;border-radius:0.6px;"></div>
<div class="t" style="left:1149.6px;top:144.06px;font-size:3.9px;line-height:4.68px;color:#d8d8d8;width:71.10000000000001px;text-align:right;">0</div>
<div class="t" style="left:1225.5px;top:143.96px;font-size:3.9px;line-height:4.68px;color:#d0d0d0;">Y</div>
<div class="t" style="left:1000px;top:155.36px;font-size:3.9px;line-height:4.68px;color:#d0d0d0;width:49.5px;text-align:right;">Size</div>
<svg class="a" style="left:1056.5px;top:154.7px" width="5" height="5" viewBox="0 0 5 5"><g transform="rotate(-45 2.5 2.5)" fill="none" stroke="#6cb4e8" stroke-width="0.55"><rect x="0.2" y="1.5" width="2.6" height="2" rx="1"/><rect x="2.2" y="1.5" width="2.6" height="2" rx="1"/></g></svg>
<div class="a" style="left:1062.4px;top:152.5px;width:72px;height:9.2px;background:#2a2a2a;border:0.6px solid #262626;box-sizing:border-box;border-radius:0.6px;"></div>
<div class="t" style="left:1062.4px;top:155.26px;font-size:3.9px;line-height:4.68px;color:#6cb4e8;width:70.2px;text-align:right;">1920</div>
<div class="t" style="left:1137.5px;top:155.36px;font-size:3.9px;line-height:4.68px;color:#d0d0d0;">W</div>
<svg class="a" style="left:1144px;top:154.7px" width="5" height="5" viewBox="0 0 5 5"><g transform="rotate(-45 2.5 2.5)" fill="none" stroke="#6cb4e8" stroke-width="0.55"><rect x="0.2" y="1.5" width="2.6" height="2" rx="1"/><rect x="2.2" y="1.5" width="2.6" height="2" rx="1"/></g></svg>
<div class="a" style="left:1149.6px;top:152.5px;width:72.9px;height:9.2px;background:#2a2a2a;border:0.6px solid #262626;box-sizing:border-box;border-radius:0.6px;"></div>
<div class="t" style="left:1149.6px;top:155.26px;font-size:3.9px;line-height:4.68px;color:#6cb4e8;width:71.10000000000001px;text-align:right;">1080</div>
<div class="t" style="left:1225.5px;top:155.36px;font-size:3.9px;line-height:4.68px;color:#d0d0d0;">H</div>
<div class="t" style="left:1000px;top:166.66px;font-size:3.9px;line-height:4.68px;color:#d0d0d0;width:49.5px;text-align:right;">Rotation</div>
<div class="a" style="left:1062.4px;top:163.6px;width:72px;height:9.8px;background:#2a2a2a;border:0.6px solid #262626;box-sizing:border-box;border-radius:0.6px;"></div>
<div class="t" style="left:1062.4px;top:166.66px;font-size:3.9px;line-height:4.68px;color:#d8d8d8;width:70.2px;text-align:right;">0.00</div>
<div class="t" style="left:1138px;top:166.80px;font-size:4.5px;line-height:5.40px;color:#d0d0d0;">°</div>
<div class="t" style="left:1000px;top:177.86px;font-size:3.9px;line-height:4.68px;color:#d0d0d0;width:49.5px;text-align:right;">Scale</div>
<div class="a" style="left:1062.4px;top:175.2px;width:160.1px;height:8.9px;background:#2a2a2a;border:0.6px solid #262626;box-sizing:border-box;border-radius:0.6px;"></div>
<div class="t" style="left:1062.4px;top:177.86px;font-size:3.9px;line-height:4.68px;color:#d8d8d8;width:150.6px;text-align:right;">1.00</div>
<svg class="a" style="left:1214px;top:178.5px" width="5" height="3" viewBox="0 0 5 3"><path d="M0.4 0.4L2.5 2.5L4.6 0.4" fill="none" stroke="#d0d0d0" stroke-width="0.7"/></svg>
<div class="t" style="left:1225px;top:177.86px;font-size:3.9px;line-height:4.68px;color:#d0d0d0;">%</div>
<div class="t" style="left:1000px;top:189.46px;font-size:3.9px;line-height:4.68px;color:#d0d0d0;width:49.5px;text-align:right;">Z stack</div>
<div class="a" style="left:1062.4px;top:186.8px;width:72px;height:9.2px;background:#2a2a2a;border:0.6px solid #262626;box-sizing:border-box;border-radius:0.6px;"></div>
<div class="t" style="left:1062.4px;top:189.56px;font-size:3.9px;line-height:4.68px;color:#d8d8d8;width:70.2px;text-align:right;">0</div>
<div class="t" style="left:1000px;top:200.86px;font-size:3.9px;line-height:4.68px;color:#d0d0d0;width:49.5px;text-align:right;">Origin</div>
<div class="a" style="left:1062px;top:198px;width:10px;height:9.4px;background:#2c2c2c;border:0.6px solid #262626;box-sizing:border-box;border-radius:0.6px;"></div>
<div class="a" style="left:1065.5px;top:201.2px;width:3px;height:3px;background:#61c0fd;"></div>
<div class="a" style="left:918px;top:210.8px;width:324px;height:7.2px;background:#383838;"></div>
<svg class="a" style="left:920.5px;top:213.1px" width="4" height="3" viewBox="0 0 4 3"><path d="M0.2 0.3H3.8L2 2.8Z" fill="#d8d8d8"/></svg>
<div class="t" style="left:1000px;top:224.96px;font-size:3.9px;line-height:4.68px;color:#d0d0d0;width:49.5px;text-align:right;">Visibility</div>
<div class="a" style="left:1062px;top:221px;width:9.6px;height:10px;background:#2c2c2c;border:0.6px solid #262626;box-sizing:border-box;border-radius:0.6px;"></div>
<svg class="a" style="left:1064px;top:223.5px" width="6" height="5" viewBox="0 0 6 5"><path d="M0.6 2.5L2.2 4.1L5.4 0.7" fill="none" stroke="#e8e8e8" stroke-width="0.7"/></svg>
<div class="t" style="left:1075px;top:224.96px;font-size:3.9px;line-height:4.68px;color:#d0d0d0;">Visible</div>
<div class="a" style="left:1149px;top:221px;width:9.6px;height:10px;background:#2c2c2c;border:0.6px solid #262626;box-sizing:border-box;border-radius:0.6px;"></div>
<div class="t" style="left:1161px;top:224.96px;font-size:3.9px;line-height:4.68px;color:#d0d0d0;">Clip</div>
<div class="t" style="left:1000px;top:235.96px;font-size:3.9px;line-height:4.68px;color:#d0d0d0;width:49.5px;text-align:right;">Opacity</div>
<div class="a" style="left:1062.4px;top:232.6px;width:160.1px;height:10.4px;background:#2a2a2a;border:0.6px solid #262626;box-sizing:border-box;border-radius:0.6px;"></div>
<div class="t" style="left:1062.4px;top:235.96px;font-size:3.9px;line-height:4.68px;color:#d8d8d8;width:150.6px;text-align:right;">1.00</div>
<svg class="a" style="left:1214px;top:236.6px" width="5" height="3" viewBox="0 0 5 3"><path d="M0.4 0.4L2.5 2.5L4.6 0.4" fill="none" stroke="#d0d0d0" stroke-width="0.7"/></svg>
<div class="a" style="left:947px;top:246.9px;width:133px;height:8.1px;background:#61c0fd;"></div>
<div class="t" style="left:947px;top:249.10px;font-size:4px;line-height:4.80px;color:#0e4c78;width:133px;text-align:center;">Rectangle</div>
<div class="a" style="left:1080px;top:246.9px;width:161.5px;height:8.1px;background:#2a2a2a;border:0.7px solid #3f7fb0;box-sizing:border-box;"></div>
<div class="t" style="left:1080px;top:249.10px;font-size:4px;line-height:4.80px;color:#6cb4e8;width:161px;text-align:center;">Layout</div>
<div class="a" style="left:918px;top:255.3px;width:324px;height:6.7px;background:#383838;"></div>
<svg class="a" style="left:920.5px;top:257.35px" width="4" height="3" viewBox="0 0 4 3"><path d="M0.2 0.3H3.8L2 2.8Z" fill="#d8d8d8"/></svg>
<div class="t" style="left:1000px;top:268.56px;font-size:3.9px;line-height:4.68px;color:#d0d0d0;width:49.5px;text-align:right;">Fill color</div>
<div class="a" style="left:1062.4px;top:265.7px;width:72.6px;height:9.3px;background:#ececec;"></div>
<svg class="a" style="left:1144.5px;top:268px" width="5" height="5" viewBox="0 0 5 5"><g transform="rotate(-45 2.5 2.5)" fill="none" stroke="#6cb4e8" stroke-width="0.55"><rect x="0.2" y="1.5" width="2.6" height="2" rx="1"/><rect x="2.2" y="1.5" width="2.6" height="2" rx="1"/></g></svg>
<div class="a" style="left:1149.6px;top:265.7px;width:72.9px;height:9.3px;background:#2a2a2a;border:0.6px solid #262626;box-sizing:border-box;border-radius:0.6px;"></div>
<div class="t" style="left:1152px;top:268.56px;font-size:3.9px;line-height:4.68px;color:#d8d8d8;">#eaeaea</div>
<svg class="a" style="left:1215px;top:268px" width="5" height="5" viewBox="0 0 5 5"><rect x="0.4" y="0.4" width="3" height="3" fill="none" stroke="#d0d0d0" stroke-width="0.6"/><rect x="1.6" y="1.6" width="3" height="3" fill="#2a2a2a" stroke="#d0d0d0" stroke-width="0.6"/></svg>
<div class="t" style="left:1000px;top:279.76px;font-size:3.9px;line-height:4.68px;color:#d0d0d0;width:49.5px;text-align:right;">Border color</div>
<div class="a" style="left:1062.4px;top:276.8px;width:72.6px;height:9.5px;background:#000000;"></div>
<div class="a" style="left:1149.6px;top:276.8px;width:72.9px;height:9.5px;background:#2a2a2a;border:0.6px solid #262626;box-sizing:border-box;border-radius:0.6px;"></div>
<div class="t" style="left:1152px;top:279.76px;font-size:3.9px;line-height:4.68px;color:#d8d8d8;">#000000</div>
<svg class="a" style="left:1215px;top:279px" width="5" height="5" viewBox="0 0 5 5"><rect x="0.4" y="0.4" width="3" height="3" fill="none" stroke="#d0d0d0" stroke-width="0.6"/><rect x="1.6" y="1.6" width="3" height="3" fill="#2a2a2a" stroke="#d0d0d0" stroke-width="0.6"/></svg>
<div class="t" style="left:1000px;top:291.46px;font-size:3.9px;line-height:4.68px;color:#d0d0d0;width:49.5px;text-align:right;">Border width</div>
<div class="a" style="left:1062.4px;top:288.6px;width:72px;height:9.4px;background:#2a2a2a;border:0.6px solid #262626;box-sizing:border-box;border-radius:0.6px;"></div>
<div class="t" style="left:1062.4px;top:291.46px;font-size:3.9px;line-height:4.68px;color:#d8d8d8;width:70.2px;text-align:right;">1</div>
<div class="t" style="left:1000px;top:302.66px;font-size:3.9px;line-height:4.68px;color:#d0d0d0;width:49.5px;text-align:right;">Radius</div>
<div class="a" style="left:1062.4px;top:300px;width:72px;height:9.2px;background:#2a2a2a;border:0.6px solid #262626;box-sizing:border-box;border-radius:0.6px;"></div>
<div class="t" style="left:1062.4px;top:302.76px;font-size:3.9px;line-height:4.68px;color:#d8d8d8;width:70.2px;text-align:right;">0</div>
<div class="a" style="left:918px;top:312px;width:324px;height:21.6px;background:#383838;"></div>
<div class="a" style="left:918px;top:519px;width:324px;height:181px;background:#2f2f2f;"></div>
<div class="a" style="left:918px;top:519px;width:324px;height:1px;background:#242424;"></div>
<div class="a" style="left:918px;top:520px;width:324px;height:8px;background:#2e2e2e;"></div>
<div class="a" style="left:918px;top:520px;width:49px;height:8px;background:#4b4b4b;"></div>
<div class="a" style="left:918px;top:528px;width:324px;height:2px;background:#424242;"></div>
<div class="a" style="left:918px;top:530px;width:324px;height:11px;background:#383838;"></div>
<div class="a" style="left:917px;top:40px;width:1px;height:660px;background:#262626;"></div>
<div class="t" style="left:926px;top:521.26px;font-size:5.4px;line-height:6.48px;color:#d0d0d0;">Connections</div>
<svg class="a" style="left:961.5px;top:522.3px" width="4" height="4" viewBox="0 0 4 4"><path d="M0.5 0.5L3.5 3.5M3.5 0.5L0.5 3.5" stroke="#7a7a7a" stroke-width="0.6"/></svg>
<div class="a" style="left:920.3px;top:530.8px;width:33.6px;height:9.6px;background:#61c0fd;border-radius:1px;"></div>
<svg class="a" style="left:922px;top:532.5px" width="6" height="6" viewBox="0 0 6 6"><path d="M0.8 0.8L5.2 5.2" stroke="#0e4c78" stroke-width="0.8"/><circle cx="1" cy="1" r="0.8" fill="#0e4c78"/></svg>
<div class="t" style="left:929.5px;top:533.94px;font-size:3.6px;line-height:4.32px;color:#0e4c78;">Connections</div>
<svg class="a" style="left:957.5px;top:533px" width="6" height="6" viewBox="0 0 6 6"><rect x="0.5" y="2.5" width="3" height="3" rx="0.6" fill="none" stroke="#c8c8c8" stroke-width="0.55"/><rect x="2.5" y="0.5" width="3" height="3" rx="0.6" fill="none" stroke="#c8c8c8" stroke-width="0.55"/></svg>
<div class="t" style="left:965px;top:533.94px;font-size:3.6px;line-height:4.32px;color:#c8c8c8;">Bindings</div>
<svg class="a" style="left:985.5px;top:533px" width="6" height="6" viewBox="0 0 6 6"><path d="M3 0.5L5.5 3L3 5.5L0.5 3Z" fill="none" stroke="#c8c8c8" stroke-width="0.6"/></svg>
<div class="t" style="left:993.5px;top:533.94px;font-size:3.6px;line-height:4.32px;color:#c8c8c8;">Properties</div>
<svg class="a" style="left:1231px;top:532.5px" width="6" height="6" viewBox="0 0 6 6"><path d="M3 0.3V5.7M0.3 3H5.7" stroke="#c8c8c8" stroke-width="0.6"/></svg>
<div class="t" style="left:920.5px;top:546.64px;font-size:5.6px;line-height:6.72px;color:#e0e0e0;">switch1</div>
<div class="t" style="left:1021px;top:546.64px;font-size:5.6px;line-height:6.72px;color:#e0e0e0;">onClicked</div>
<div class="t" style="left:1125px;top:546.64px;font-size:5.6px;line-height:6.72px;color:#e0e0e0;">Assignment</div>
<div class="a" style="left:1px;top:568px;width:916px;height:132px;background:#2f2f2f;"></div>
<div class="a" style="left:1px;top:568px;width:916px;height:1px;background:#222222;"></div>
<div class="a" style="left:1px;top:569px;width:916px;height:8px;background:#2e2e2e;"></div>
<div class="a" style="left:1px;top:569px;width:33px;height:8px;background:#4b4b4b;"></div>
<div class="a" style="left:1px;top:577px;width:916px;height:1px;background:#424242;"></div>
<div class="a" style="left:1px;top:578px;width:916px;height:14px;background:#383838;"></div>
<div class="t" style="left:9.7px;top:570.70px;font-size:5.5px;line-height:6.60px;color:#d0d0d0;">States</div>
<svg class="a" style="left:29px;top:572px" width="4" height="4" viewBox="0 0 4 4"><path d="M0.5 0.5L3.5 3.5M3.5 0.5L0.5 3.5" stroke="#7a7a7a" stroke-width="0.6"/></svg>
<div class="t" style="left:3.9px;top:583.39px;font-size:3.85px;line-height:4.62px;color:#d0d0d0;">State Group</div>
<div class="a" style="left:28px;top:579.5px;width:46.5px;height:11.5px;background:#363636;border:0.5px solid #303030;box-sizing:border-box;"></div>
<div class="t" style="left:30px;top:583.42px;font-size:3.8px;line-height:4.56px;color:#d8d8d8;">Default</div>
<svg class="a" style="left:67.5px;top:584px" width="5" height="3" viewBox="0 0 5 3"><path d="M0.4 0.4L2.5 2.5L4.6 0.4" fill="none" stroke="#e0e0e0" stroke-width="0.8"/></svg>
<svg class="a" style="left:79.5px;top:582px" width="7" height="7" viewBox="0 0 7 7"><path d="M3.5 0.3V6.7M0.3 3.5H6.7" stroke="#c8c8c8" stroke-width="0.7"/></svg>
<div class="a" style="left:92.8px;top:585.3px;width:5.2px;height:0.6px;background:#5a5a5a;"></div>
<svg class="a" style="left:104.5px;top:582px" width="7" height="7" viewBox="0 0 7 7"><rect x="0.5" y="0.5" width="6" height="6" rx="0.8" fill="none" stroke="#555" stroke-width="0.6"/><path d="M2 5L5 2" stroke="#555" stroke-width="0.6"/></svg>
<svg class="a" style="left:893px;top:582px" width="7" height="7" viewBox="0 0 7 7"><rect x="0.5" y="0.5" width="2.5" height="2.5" fill="none" stroke="#c8c8c8" stroke-width="0.6"/><rect x="4" y="0.5" width="2.5" height="2.5" fill="none" stroke="#c8c8c8" stroke-width="0.6"/><rect x="0.5" y="4" width="2.5" height="2.5" fill="none" stroke="#c8c8c8" stroke-width="0.6"/><rect x="4" y="4" width="2.5" height="2.5" fill="none" stroke="#c8c8c8" stroke-width="0.6"/></svg>
<div class="a" style="left:906px;top:582.5px;width:6px;height:0.6px;background:#9a9a9a;"></div>
<div class="a" style="left:906px;top:584.5px;width:6px;height:0.7px;background:#c8c8c8;"></div>
<div class="a" style="left:906px;top:587.5px;width:6px;height:0.7px;background:#c8c8c8;"></div>
<div class="a" style="left:1px;top:592px;width:916px;height:108px;background:#2f2f2f;"></div>
<div class="a" style="left:4.1px;top:595.2px;width:98px;height:101.6px;background:#1e1e1e;border:0.9px solid #6bb3e6;border-radius:3px;box-sizing:border-box;"></div>
<div class="a" style="left:7.5px;top:598.6px;width:16.5px;height:8.4px;background:#61c0fd;border-radius:1px;"></div>
<div class="t" style="left:8.8px;top:601.08px;font-size:3.7px;line-height:4.44px;color:#155a8a;">Default</div>
<div class="t" style="left:27px;top:601.08px;font-size:3.7px;line-height:4.44px;color:#e0e0e0;">Base State</div>
<div class="a" style="left:7.1px;top:618.7px;width:92.2px;height:54.3px;background:#ececec;"></div>
<svg class="a" style="left:7px;top:618px" width="93" height="56" viewBox="0 0 93 56"><circle cx="8.4" cy="4.2" r="0.9" fill="#444"/><rect x="9.8" y="3.8" width="1.6" height="0.6" fill="#bbb"/><rect x="7.7" y="12" width="11.3" height="2.3" rx="0.6" fill="#2a8ee6"/><rect x="7.7" y="14.3" width="11.3" height="2.3" fill="#f6f6f6"/><rect x="7.7" y="16.6" width="11.3" height="2.3" fill="#dcdcff"/><rect x="7.7" y="18.9" width="11.3" height="2.3" rx="0.6" fill="#03507d"/></svg>
<svg class="a" style="left:108px;top:595px" width="99" height="103" viewBox="0 0 99 103"><rect x="0.8" y="0.8" width="97.4" height="101.4" fill="none" stroke="#8e8e8e" stroke-width="1.1" stroke-dasharray="4 3.85" stroke-dashoffset="-2"/></svg>
<div class="a" style="left:150.3px;top:645.4px;width:14px;height:1.2px;background:#8a8a8a;"></div>
<div class="a" style="left:156.7px;top:639px;width:1.2px;height:14px;background:#8a8a8a;"></div>
<div class="a" style="left:1px;top:700px;width:1241px;height:13px;background:#5c5a00;"></div>
<div class="t" style="left:2px;top:704.08px;font-size:5.7px;line-height:6.84px;color:#e6e6d0;">Create Kits for Qt for MCUs? To do it later, select Edit &gt; Preferences &gt; Devices &gt; MCU.</div>
<div class="a" style="left:1093px;top:702px;width:75px;height:10px;background:#3a3a3a;border-radius:1px;"></div>
<div class="t" style="left:1095px;top:704.38px;font-size:5.2px;line-height:6.24px;color:#e0e0e0;transform:scaleX(1.1169646877906714);transform-origin:0 50%;">Create Kits for Qt for MCUs</div>
<div class="a" style="left:1171px;top:702px;width:57px;height:10px;background:#3a3a3a;border-radius:1px;"></div>
<div class="t" style="left:1174px;top:704.38px;font-size:5.2px;line-height:6.24px;color:#e0e0e0;transform:scaleX(1.1531947097192692);transform-origin:0 50%;">Do Not Show Again</div>
<svg class="a" style="left:1233.5px;top:703.5px" width="5" height="5" viewBox="0 0 5 5"><path d="M0.6 0.6L4.4 4.4M4.4 0.6L0.6 4.4" stroke="#e0e0d0" stroke-width="0.7"/></svg>
<div class="a" style="left:1px;top:713px;width:1241px;height:13px;background:#202020;"></div>
<svg class="a" style="left:4.5px;top:716px" width="6" height="7" viewBox="0 0 6 7"><circle cx="3" cy="3.3" r="2.4" fill="none" stroke="#9a9a9a" stroke-width="0.6"/><path d="M1.5 2L4.5 5" stroke="#9a9a9a" stroke-width="0.6"/></svg>
<div class="t" style="left:22px;top:717.66px;font-size:3.9px;line-height:4.68px;color:#c0c0c0;">Kit</div>
<div class="t" style="left:37px;top:717.66px;font-size:3.9px;line-height:4.68px;color:#c0c0c0;">snapshot 6.8</div>
<svg class="a" style="left:80.5px;top:718.6px" width="5" height="3" viewBox="0 0 5 3"><path d="M0.4 0.4L2.5 2.5L4.6 0.4" fill="none" stroke="#c0c0c0" stroke-width="0.7"/></svg>
<div class="t" style="left:96px;top:717.66px;font-size:3.9px;line-height:4.68px;color:#c0c0c0;">Style</div>
<div class="t" style="left:116px;top:717.66px;font-size:3.9px;line-height:4.68px;color:#c0c0c0;">Basic</div>
<svg class="a" style="left:159.5px;top:718.6px" width="5" height="3" viewBox="0 0 5 3"><path d="M0.4 0.4L2.5 2.5L4.6 0.4" fill="none" stroke="#c0c0c0" stroke-width="0.7"/></svg>
<div class="a" style="left:1195.5px;top:719px;width:1px;height:1px;background:#aaa;border-radius:50%;"></div>
<svg class="a" style="left:1198px;top:716.5px" width="6" height="6" viewBox="0 0 6 6"><path d="M3 0.6L5.5 5.3H0.5Z" fill="none" stroke="#c0c0c0" stroke-width="0.6"/></svg>
<svg class="a" style="left:1205.5px;top:716.3px" width="6" height="6" viewBox="0 0 6 6"><circle cx="3" cy="3" r="2.5" fill="none" stroke="#c0c0c0" stroke-width="0.6"/><path d="M3 1.6V3.6" stroke="#c0c0c0" stroke-width="0.6"/></svg>
<div class="a" style="left:1213px;top:718.8px;width:1px;height:1.5px;background:#aaa;"></div>
<svg class="a" style="left:1232px;top:716.3px" width="7" height="7" viewBox="0 0 7 7"><rect x="3" y="0.6" width="3.4" height="5.8" fill="none" stroke="#c0c0c0" stroke-width="0.6"/><path d="M0.3 3.5H4M2.8 2.3L4 3.5L2.8 4.7" fill="none" stroke="#c0c0c0" stroke-width="0.6"/></svg>
<div class="a" style="left:560px;top:153px;width:388px;height:264px;background:#2f2f2f;box-shadow:0 1px 5px rgba(0,0,0,0.45);"></div>
<div class="a" style="left:947px;top:153px;width:1px;height:264px;background:#474747;"></div>
<div class="a" style="left:560px;top:153px;width:387px;height:14px;background:#2b201c;"></div>
<div class="t" style="left:564px;top:156.92px;font-size:6.3px;line-height:7.56px;color:#e8e8e8;transform:scaleX(0.8955400523030438);transform-origin:0 50%;">Design System - Qt Design Studio</div>
<div class="a" style="left:937px;top:156px;width:10px;height:10.2px;background:#d45757;"></div>
<svg class="a" style="left:939.5px;top:158.6px" width="5" height="5" viewBox="0 0 5 5"><path d="M0.8 0.8L4.2 4.2M4.2 0.8L0.8 4.2" stroke="#fff" stroke-width="0.9"/></svg>
<div class="a" style="left:560px;top:167px;width:387px;height:14.5px;background:#393939;"></div>
<div class="a" style="left:563.3px;top:169px;width:67.7px;height:10.6px;background:#353535;border:0.5px solid #323232;box-sizing:border-box;"></div>
<div class="t" style="left:565px;top:172.46px;font-size:4.4px;line-height:5.28px;color:#c8c8c8;">AppTheme</div>
<svg class="a" style="left:624px;top:173px" width="6" height="4" viewBox="0 0 6 4"><path d="M0.5 0.5L3 3.2L5.5 0.5" fill="none" stroke="#c8c8c8" stroke-width="0.7"/></svg>
<div class="a" style="left:634px;top:169px;width:68px;height:10.6px;background:#353535;border:0.5px solid #323232;box-sizing:border-box;"></div>
<div class="t" style="left:636px;top:172.46px;font-size:4.4px;line-height:5.28px;color:#c8c8c8;">dark</div>
<svg class="a" style="left:695px;top:173px" width="6" height="4" viewBox="0 0 6 4"><path d="M0.5 0.5L3 3.2L5.5 0.5" fill="none" stroke="#c8c8c8" stroke-width="0.7"/></svg>
<div class="a" style="left:707.5px;top:174px;width:1px;height:1px;background:#d0d0d0;border-radius:50%;"></div>
<div class="a" style="left:709.8px;top:174px;width:1px;height:1px;background:#d0d0d0;border-radius:50%;"></div>
<div class="a" style="left:712.1px;top:174px;width:1px;height:1px;background:#d0d0d0;border-radius:50%;"></div>
<div class="a" style="left:718.5px;top:169px;width:14.5px;height:11px;background:#ffffff;border-radius:1.5px;"></div>
<div class="t" style="left:719.5px;top:171.70px;font-size:6px;line-height:7.20px;color:#202020;">load</div>
<div class="a" style="left:562.5px;top:182.9px;width:257.0px;height:183.54px;background:#2f2f2f;"></div>
<div class="a" style="left:562.5px;top:182.4px;width:257.0px;height:1px;background:#373737;"></div>
<div class="a" style="left:562.5px;top:195.51px;width:257.0px;height:1px;background:#373737;"></div>
<div class="a" style="left:562.5px;top:208.62px;width:257.0px;height:1px;background:#373737;"></div>
<div class="a" style="left:562.5px;top:221.73000000000002px;width:257.0px;height:1px;background:#373737;"></div>
<div class="a" style="left:562.5px;top:234.84px;width:257.0px;height:1px;background:#373737;"></div>
<div class="a" style="left:562.5px;top:247.95px;width:257.0px;height:1px;background:#373737;"></div>
<div class="a" style="left:562.5px;top:261.06px;width:257.0px;height:1px;background:#373737;"></div>
<div class="a" style="left:562.5px;top:274.17px;width:257.0px;height:1px;background:#373737;"></div>
<div class="a" style="left:562.5px;top:287.28px;width:257.0px;height:1px;background:#373737;"></div>
<div class="a" style="left:562.5px;top:300.39px;width:257.0px;height:1px;background:#373737;"></div>
<div class="a" style="left:562.5px;top:313.5px;width:257.0px;height:1px;background:#373737;"></div>
<div class="a" style="left:562.5px;top:326.61px;width:257.0px;height:1px;background:#373737;"></div>
<div class="a" style="left:562.5px;top:339.72px;width:257.0px;height:1px;background:#373737;"></div>
<div class="a" style="left:562.5px;top:352.83000000000004px;width:257.0px;height:1px;background:#373737;"></div>
<div class="a" style="left:562.5px;top:365.94px;width:257.0px;height:1px;background:#373737;"></div>
<div class="a" style="left:562.0px;top:182.9px;width:1px;height:183.54px;background:#373737;"></div>
<div class="a" style="left:626.0px;top:182.9px;width:1px;height:183.54px;background:#373737;"></div>
<div class="a" style="left:690.7px;top:182.9px;width:1px;height:183.54px;background:#373737;"></div>
<div class="a" style="left:754.7px;top:182.9px;width:1px;height:183.54px;background:#373737;"></div>
<div class="a" style="left:819.0px;top:182.9px;width:1px;height:183.54px;background:#373737;"></div>
<div class="t" style="left:566.5px;top:186.96px;font-size:6px;line-height:7.20px;color:#d8d8d8;">Name</div>
<div class="t" style="left:631.3px;top:187.31px;font-size:5.4px;line-height:6.48px;color:#c41a1a;">dark</div>
<div class="t" style="left:695px;top:186.96px;font-size:6px;line-height:7.20px;color:#d8d8d8;">light</div>
<div class="t" style="left:759.5px;top:186.96px;font-size:6px;line-height:7.20px;color:#d8d8d8;">mono</div>
<svg class="a" style="left:566.3px;top:200.165px" width="6" height="6" viewBox="0 0 6 6"><circle cx="3" cy="3" r="2.5" fill="none" stroke="#cfcfcf" stroke-width="0.7"/><circle cx="2" cy="2.3" r="0.6" fill="#cfcfcf"/><circle cx="3.8" cy="2" r="0.6" fill="#cfcfcf"/><circle cx="4.2" cy="3.7" r="0.6" fill="#cfcfcf"/></svg>
<div class="t" style="left:574px;top:200.41px;font-size:5.75px;line-height:6.90px;color:#d8d8d8;">btn_background</div>
<svg class="a" style="left:566.3px;top:213.275px" width="6" height="6" viewBox="0 0 6 6"><circle cx="3" cy="3" r="2.5" fill="none" stroke="#cfcfcf" stroke-width="0.7"/><circle cx="2" cy="2.3" r="0.6" fill="#cfcfcf"/><circle cx="3.8" cy="2" r="0.6" fill="#cfcfcf"/><circle cx="4.2" cy="3.7" r="0.6" fill="#cfcfcf"/></svg>
<div class="t" style="left:574px;top:213.53px;font-size:5.75px;line-height:6.90px;color:#d8d8d8;">font_color</div>
<svg class="a" style="left:566.3px;top:226.38500000000002px" width="6" height="6" viewBox="0 0 6 6"><circle cx="3" cy="3" r="2.5" fill="none" stroke="#cfcfcf" stroke-width="0.7"/><circle cx="2" cy="2.3" r="0.6" fill="#cfcfcf"/><circle cx="3.8" cy="2" r="0.6" fill="#cfcfcf"/><circle cx="4.2" cy="3.7" r="0.6" fill="#cfcfcf"/></svg>
<div class="t" style="left:574px;top:226.64px;font-size:5.75px;line-height:6.90px;color:#d8d8d8;">logo_background</div>
<svg class="a" style="left:566.3px;top:239.495px" width="6" height="6" viewBox="0 0 6 6"><circle cx="3" cy="3" r="2.5" fill="none" stroke="#cfcfcf" stroke-width="0.7"/><circle cx="2" cy="2.3" r="0.6" fill="#cfcfcf"/><circle cx="3.8" cy="2" r="0.6" fill="#cfcfcf"/><circle cx="4.2" cy="3.7" r="0.6" fill="#cfcfcf"/></svg>
<div class="t" style="left:574px;top:239.75px;font-size:5.75px;line-height:6.90px;color:#d8d8d8;">screen_background</div>
<svg class="a" style="left:566.3px;top:253.605px" width="6" height="4" viewBox="0 0 6 4"><rect x="0.4" y="0.6" width="5.2" height="2.8" rx="1.4" fill="none" stroke="#cfcfcf" stroke-width="0.6"/><circle cx="2" cy="2" r="0.9" fill="#cfcfcf"/></svg>
<div class="t" style="left:574px;top:252.85px;font-size:5.75px;line-height:6.90px;color:#d8d8d8;">showLogo</div>
<svg class="a" style="left:566.3px;top:265.71500000000003px" width="6" height="6" viewBox="0 0 6 6"><path d="M2.4 0.3L1.7 5.7M4.4 0.3L3.7 5.7M0.4 2.1H5.6M0.3 3.9H5.5" stroke="#d0d0d0" stroke-width="0.6"/></svg>
<div class="t" style="left:574px;top:265.97px;font-size:5.75px;line-height:6.90px;color:#d8d8d8;">font_h1_fz</div>
<svg class="a" style="left:566.3px;top:278.82500000000005px" width="6" height="6" viewBox="0 0 6 6"><path d="M2.4 0.3L1.7 5.7M4.4 0.3L3.7 5.7M0.4 2.1H5.6M0.3 3.9H5.5" stroke="#d0d0d0" stroke-width="0.6"/></svg>
<div class="t" style="left:574px;top:279.08px;font-size:5.75px;line-height:6.90px;color:#d8d8d8;">font_h2_fz</div>
<svg class="a" style="left:566.3px;top:291.935px" width="6" height="6" viewBox="0 0 6 6"><path d="M2.4 0.3L1.7 5.7M4.4 0.3L3.7 5.7M0.4 2.1H5.6M0.3 3.9H5.5" stroke="#d0d0d0" stroke-width="0.6"/></svg>
<div class="t" style="left:574px;top:292.19px;font-size:5.75px;line-height:6.90px;color:#d8d8d8;">size_effect_blur</div>
<svg class="a" style="left:566.3px;top:305.045px" width="6" height="6" viewBox="0 0 6 6"><path d="M2.4 0.3L1.7 5.7M4.4 0.3L3.7 5.7M0.4 2.1H5.6M0.3 3.9H5.5" stroke="#d0d0d0" stroke-width="0.6"/></svg>
<div class="t" style="left:574px;top:305.30px;font-size:5.75px;line-height:6.90px;color:#d8d8d8;">size_effect_rect</div>
<svg class="a" style="left:566.3px;top:318.15500000000003px" width="6" height="6" viewBox="0 0 6 6"><path d="M2.4 0.3L1.7 5.7M4.4 0.3L3.7 5.7M0.4 2.1H5.6M0.3 3.9H5.5" stroke="#d0d0d0" stroke-width="0.6"/></svg>
<div class="t" style="left:574px;top:318.41px;font-size:5.75px;line-height:6.90px;color:#d8d8d8;">size_effect_spread</div>
<svg class="a" style="left:566.3px;top:331.26500000000004px" width="6" height="6" viewBox="0 0 6 6"><path d="M2.4 0.3L1.7 5.7M4.4 0.3L3.7 5.7M0.4 2.1H5.6M0.3 3.9H5.5" stroke="#d0d0d0" stroke-width="0.6"/></svg>
<div class="t" style="left:574px;top:331.52px;font-size:5.75px;line-height:6.90px;color:#d8d8d8;">size_effect_x</div>
<svg class="a" style="left:566.3px;top:344.37500000000006px" width="6" height="6" viewBox="0 0 6 6"><path d="M2.4 0.3L1.7 5.7M4.4 0.3L3.7 5.7M0.4 2.1H5.6M0.3 3.9H5.5" stroke="#d0d0d0" stroke-width="0.6"/></svg>
<div class="t" style="left:574px;top:344.63px;font-size:5.75px;line-height:6.90px;color:#d8d8d8;">size_effect_y</div>
<svg class="a" style="left:566.3px;top:357.48500000000007px" width="6" height="6" viewBox="0 0 6 6"><path d="M0.5 0.6H5.5M3 0.6V5.6M2 5.6H4M0.5 0.6V1.4M5.5 0.6V1.4" stroke="#cfcfcf" stroke-width="0.6" fill="none"/></svg>
<div class="t" style="left:574px;top:357.74px;font-size:5.75px;line-height:6.90px;color:#d8d8d8;">text_123</div>
<div class="a" style="left:631.0px;top:200.065px;width:6.2px;height:6.2px;background:#2999f0;box-shadow:0 0 0 0.6px #111;"></div>
<div class="t" style="left:640.0px;top:200.50px;font-size:5.6px;line-height:6.72px;color:#6aa8d8;">#2490f3</div>
<svg class="a" style="left:682.7px;top:200.665px" width="5" height="5" viewBox="0 0 5 5"><g transform="rotate(-45 2.5 2.5)" fill="none" stroke="#6cb4e8" stroke-width="0.55"><rect x="0.2" y="1.5" width="2.6" height="2" rx="1"/><rect x="2.2" y="1.5" width="2.6" height="2" rx="1"/></g></svg>
<div class="a" style="left:695.7px;top:200.065px;width:6.2px;height:6.2px;background:#f29af7;box-shadow:0 0 0 0.6px #111;"></div>
<div class="t" style="left:704.7px;top:200.50px;font-size:5.6px;line-height:6.72px;color:#6aa8d8;">#f796ff</div>
<svg class="a" style="left:746.7px;top:200.665px" width="5" height="5" viewBox="0 0 5 5"><g transform="rotate(-45 2.5 2.5)" fill="none" stroke="#6cb4e8" stroke-width="0.55"><rect x="0.2" y="1.5" width="2.6" height="2" rx="1"/><rect x="2.2" y="1.5" width="2.6" height="2" rx="1"/></g></svg>
<div class="a" style="left:759.7px;top:200.065px;width:6.2px;height:6.2px;background:#f2f2f2;box-shadow:0 0 0 0.6px #111;"></div>
<div class="t" style="left:768.7px;top:200.50px;font-size:5.6px;line-height:6.72px;color:#6aa8d8;">#f2f2f2</div>
<svg class="a" style="left:811.0px;top:200.665px" width="5" height="5" viewBox="0 0 5 5"><g transform="rotate(-45 2.5 2.5)" fill="none" stroke="#6cb4e8" stroke-width="0.55"><rect x="0.2" y="1.5" width="2.6" height="2" rx="1"/><rect x="2.2" y="1.5" width="2.6" height="2" rx="1"/></g></svg>
<div class="a" style="left:631.0px;top:213.175px;width:6.2px;height:6.2px;background:#f2f2f2;box-shadow:0 0 0 0.6px #111;"></div>
<div class="t" style="left:640.0px;top:213.61px;font-size:5.6px;line-height:6.72px;color:#6aa8d8;">#f2f2f2</div>
<svg class="a" style="left:682.7px;top:213.775px" width="5" height="5" viewBox="0 0 5 5"><g transform="rotate(-45 2.5 2.5)" fill="none" stroke="#6cb4e8" stroke-width="0.55"><rect x="0.2" y="1.5" width="2.6" height="2" rx="1"/><rect x="2.2" y="1.5" width="2.6" height="2" rx="1"/></g></svg>
<div class="a" style="left:695.7px;top:213.175px;width:6.2px;height:6.2px;background:#ffffff;box-shadow:0 0 0 0.6px #111;"></div>
<div class="t" style="left:704.7px;top:213.61px;font-size:5.6px;line-height:6.72px;color:#d8d8d8;">#ffffff</div>
<div class="a" style="left:759.7px;top:213.175px;width:6.2px;height:6.2px;background:#000000;box-shadow:0 0 0 0.6px #111;"></div>
<div class="t" style="left:768.7px;top:213.61px;font-size:5.6px;line-height:6.72px;color:#d8d8d8;">#000000</div>
<div class="a" style="left:631.0px;top:226.28500000000003px;width:6.2px;height:6.2px;background:#d8d8ff;box-shadow:0 0 0 0.6px #111;"></div>
<div class="t" style="left:640.0px;top:226.72px;font-size:5.6px;line-height:6.72px;color:#6aa8d8;">#d2d6ff</div>
<svg class="a" style="left:682.7px;top:226.88500000000002px" width="5" height="5" viewBox="0 0 5 5"><g transform="rotate(-45 2.5 2.5)" fill="none" stroke="#6cb4e8" stroke-width="0.55"><rect x="0.2" y="1.5" width="2.6" height="2" rx="1"/><rect x="2.2" y="1.5" width="2.6" height="2" rx="1"/></g></svg>
<div class="a" style="left:695.7px;top:226.28500000000003px;width:6.2px;height:6.2px;background:#f2f2f2;box-shadow:0 0 0 0.6px #111;"></div>
<div class="t" style="left:704.7px;top:226.72px;font-size:5.6px;line-height:6.72px;color:#6aa8d8;">#f2f2f2</div>
<svg class="a" style="left:746.7px;top:226.88500000000002px" width="5" height="5" viewBox="0 0 5 5"><g transform="rotate(-45 2.5 2.5)" fill="none" stroke="#6cb4e8" stroke-width="0.55"><rect x="0.2" y="1.5" width="2.6" height="2" rx="1"/><rect x="2.2" y="1.5" width="2.6" height="2" rx="1"/></g></svg>
<div class="a" style="left:759.7px;top:226.28500000000003px;width:6.2px;height:6.2px;background:#a7a7a7;box-shadow:0 0 0 0.6px #111;"></div>
<div class="t" style="left:768.7px;top:226.72px;font-size:5.6px;line-height:6.72px;color:#6aa8d8;">#a7a7a7</div>
<svg class="a" style="left:811.0px;top:226.88500000000002px" width="5" height="5" viewBox="0 0 5 5"><g transform="rotate(-45 2.5 2.5)" fill="none" stroke="#6cb4e8" stroke-width="0.55"><rect x="0.2" y="1.5" width="2.6" height="2" rx="1"/><rect x="2.2" y="1.5" width="2.6" height="2" rx="1"/></g></svg>
<div class="a" style="left:631.0px;top:239.395px;width:6.2px;height:6.2px;background:#0a5d8a;box-shadow:0 0 0 0.6px #111;"></div>
<div class="t" style="left:640.0px;top:239.83px;font-size:5.6px;line-height:6.72px;color:#6aa8d8;">#005382</div>
<svg class="a" style="left:682.7px;top:239.995px" width="5" height="5" viewBox="0 0 5 5"><g transform="rotate(-45 2.5 2.5)" fill="none" stroke="#6cb4e8" stroke-width="0.55"><rect x="0.2" y="1.5" width="2.6" height="2" rx="1"/><rect x="2.2" y="1.5" width="2.6" height="2" rx="1"/></g></svg>
<div class="a" style="left:695.7px;top:239.395px;width:6.2px;height:6.2px;background:#b57ce8;box-shadow:0 0 0 0.6px #111;"></div>
<div class="t" style="left:704.7px;top:239.83px;font-size:5.6px;line-height:6.72px;color:#6aa8d8;">#b36eea</div>
<svg class="a" style="left:746.7px;top:239.995px" width="5" height="5" viewBox="0 0 5 5"><g transform="rotate(-45 2.5 2.5)" fill="none" stroke="#6cb4e8" stroke-width="0.55"><rect x="0.2" y="1.5" width="2.6" height="2" rx="1"/><rect x="2.2" y="1.5" width="2.6" height="2" rx="1"/></g></svg>
<div class="a" style="left:759.7px;top:239.395px;width:6.2px;height:6.2px;background:#6d6d6d;box-shadow:0 0 0 0.6px #111;"></div>
<div class="t" style="left:768.7px;top:239.83px;font-size:5.6px;line-height:6.72px;color:#6aa8d8;">#6d6d6d</div>
<svg class="a" style="left:811.0px;top:239.995px" width="5" height="5" viewBox="0 0 5 5"><g transform="rotate(-45 2.5 2.5)" fill="none" stroke="#6cb4e8" stroke-width="0.55"><rect x="0.2" y="1.5" width="2.6" height="2" rx="1"/><rect x="2.2" y="1.5" width="2.6" height="2" rx="1"/></g></svg>
<div class="a" style="left:630.6px;top:251.95499999999998px;width:13px;height:7.3px;background:#61c0fd;border-radius:3.65px;"></div>
<div class="a" style="left:637.4px;top:252.855px;width:5.5px;height:5.5px;background:#fff;border-radius:50%;"></div>
<div class="t" style="left:645.5px;top:253.47px;font-size:4.4px;line-height:5.28px;color:#c8c8c8;">true</div>
<div class="a" style="left:694.6px;top:251.95499999999998px;width:13px;height:7.3px;background:#61c0fd;border-radius:3.65px;"></div>
<div class="a" style="left:701.4px;top:252.855px;width:5.5px;height:5.5px;background:#fff;border-radius:50%;"></div>
<div class="t" style="left:709.5px;top:253.47px;font-size:4.4px;line-height:5.28px;color:#6aa8d8;">true</div>
<svg class="a" style="left:746.5px;top:253.105px" width="5" height="5" viewBox="0 0 5 5"><g transform="rotate(-45 2.5 2.5)" fill="none" stroke="#6cb4e8" stroke-width="0.55"><rect x="0.2" y="1.5" width="2.6" height="2" rx="1"/><rect x="2.2" y="1.5" width="2.6" height="2" rx="1"/></g></svg>
<div class="a" style="left:759.7px;top:251.95499999999998px;width:13px;height:7.3px;background:#232323;border-radius:3.65px;"></div>
<div class="a" style="left:760.4000000000001px;top:252.855px;width:5.5px;height:5.5px;background:#fff;border-radius:50%;"></div>
<div class="t" style="left:774px;top:253.47px;font-size:4.4px;line-height:5.28px;color:#c8c8c8;">false</div>
<div class="t" style="left:631.0px;top:265.94px;font-size:5.8px;line-height:6.96px;color:#d8d8d8;">32</div>
<div class="t" style="left:695.7px;top:265.94px;font-size:5.8px;line-height:6.96px;color:#d8d8d8;">24</div>
<div class="t" style="left:759.7px;top:265.94px;font-size:5.8px;line-height:6.96px;color:#d8d8d8;">48</div>
<div class="t" style="left:631.0px;top:279.05px;font-size:5.8px;line-height:6.96px;color:#d8d8d8;">20</div>
<div class="t" style="left:695.7px;top:279.05px;font-size:5.8px;line-height:6.96px;color:#d8d8d8;">18</div>
<div class="t" style="left:759.7px;top:279.05px;font-size:5.8px;line-height:6.96px;color:#d8d8d8;">18</div>
<div class="t" style="left:631.0px;top:292.15px;font-size:5.8px;line-height:6.96px;color:#d8d8d8;">8</div>
<div class="t" style="left:695.7px;top:292.15px;font-size:5.8px;line-height:6.96px;color:#6aa8d8;">8</div>
<svg class="a" style="left:746.7px;top:292.435px" width="5" height="5" viewBox="0 0 5 5"><g transform="rotate(-45 2.5 2.5)" fill="none" stroke="#6cb4e8" stroke-width="0.55"><rect x="0.2" y="1.5" width="2.6" height="2" rx="1"/><rect x="2.2" y="1.5" width="2.6" height="2" rx="1"/></g></svg>
<div class="t" style="left:759.7px;top:292.15px;font-size:5.8px;line-height:6.96px;color:#d8d8d8;">8</div>
<div class="t" style="left:631.0px;top:305.26px;font-size:5.8px;line-height:6.96px;color:#d8d8d8;">50</div>
<div class="t" style="left:695.7px;top:305.26px;font-size:5.8px;line-height:6.96px;color:#d8d8d8;">60</div>
<div class="t" style="left:759.7px;top:305.26px;font-size:5.8px;line-height:6.96px;color:#d8d8d8;">40</div>
<div class="t" style="left:631.0px;top:318.38px;font-size:5.8px;line-height:6.96px;color:#d8d8d8;">8</div>
<div class="t" style="left:695.7px;top:318.38px;font-size:5.8px;line-height:6.96px;color:#d8d8d8;">4</div>
<div class="t" style="left:759.7px;top:318.38px;font-size:5.8px;line-height:6.96px;color:#d8d8d8;">8</div>
<div class="t" style="left:631.0px;top:331.49px;font-size:5.8px;line-height:6.96px;color:#d8d8d8;">8</div>
<div class="t" style="left:695.7px;top:331.49px;font-size:5.8px;line-height:6.96px;color:#d8d8d8;">4</div>
<div class="t" style="left:759.7px;top:331.49px;font-size:5.8px;line-height:6.96px;color:#d8d8d8;">8</div>
<div class="t" style="left:631.0px;top:344.60px;font-size:5.8px;line-height:6.96px;color:#d8d8d8;">4</div>
<div class="t" style="left:695.7px;top:344.60px;font-size:5.8px;line-height:6.96px;color:#d8d8d8;">4</div>
<div class="t" style="left:759.7px;top:344.60px;font-size:5.8px;line-height:6.96px;color:#d8d8d8;">4</div>
<div class="t" style="left:631.0px;top:357.71px;font-size:5.8px;line-height:6.96px;color:#d8d8d8;">blabla</div>
<div class="t" style="left:695.7px;top:357.71px;font-size:5.8px;line-height:6.96px;color:#6aa8d8;">blabla</div>
<svg class="a" style="left:746.7px;top:357.98500000000007px" width="5" height="5" viewBox="0 0 5 5"><g transform="rotate(-45 2.5 2.5)" fill="none" stroke="#6cb4e8" stroke-width="0.55"><rect x="0.2" y="1.5" width="2.6" height="2" rx="1"/><rect x="2.2" y="1.5" width="2.6" height="2" rx="1"/></g></svg>
<div class="t" style="left:759.7px;top:357.71px;font-size:5.8px;line-height:6.96px;color:#d8d8d8;">blabla</div>
<div class="a" style="left:729px;top:406.5px;width:37px;height:9px;background:#353535;border-radius:1px;"></div>
<svg class="a" style="left:731px;top:408px" width="5" height="5" viewBox="0 0 5 5"><path d="M2.5 0.3V4.7M0.3 2.5H4.7" stroke="#bbb" stroke-width="0.5"/></svg>
<div class="t" style="left:737.5px;top:409.22px;font-size:3.8px;line-height:4.56px;color:#c8c8c8;">Create variable</div>
<div class="a" style="left:936px;top:274.8px;width:9px;height:35.2px;background:#343434;"></div>
<div class="t" style="left:940.5px;top:288.2px;font-size:4.8px;line-height:5px;color:#d8d8d8;transform:translate(-50%,-50%) rotate(-90deg) scaleX(0.86);">Create mode</div>
<div class="a" style="left:947px;top:315px;width:4px;height:3px;background:#4a86b8;"></div>
<div class="a" style="left:948.5px;top:315.5px;width:1px;height:2px;background:#cfe3f3;"></div>
<svg class="a" style="left:937.5px;top:303px" width="6" height="6" viewBox="0 0 6 6"><path d="M3 0.3V5.7M0.3 3H5.7" stroke="#ccc" stroke-width="0.6"/></svg>
<svg class="a" style="left:859.5px;top:208.5px" width="8" height="11" viewBox="0 0 8 11"><path d="M0.5 0.5V9L2.6 7L4.2 10.3L5.6 9.7L4.1 6.5H7Z" fill="#fff" stroke="#111" stroke-width="0.6"/></svg>
</div></body></html>
